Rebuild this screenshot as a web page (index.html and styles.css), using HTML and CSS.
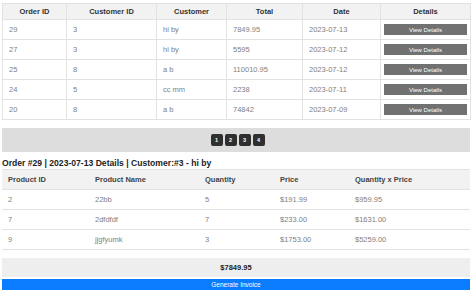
FILE: index.html
```html
<!DOCTYPE html>
<html lang="en">
<head>
    <meta charset="UTF-8">
    <title>Orders</title>
    <link rel="stylesheet" href="styles.css">
</head>
<body>
    <div class="Orders">
        <table class="Orders-table">
            <colgroup>
                <col style="width:64px"><col style="width:90px"><col style="width:70px">
                <col style="width:76px"><col style="width:78px"><col style="width:90px">
            </colgroup>
            <thead>
                <tr>
                    <th>Order ID</th>
                    <th>Customer ID</th>
                    <th>Customer</th>
                    <th>Total</th>
                    <th>Date</th>
                    <th>Details</th>
                </tr>
            </thead>
            <tbody>
                <tr><td>29</td><td>3</td><td>hi by</td><td>7849.95</td><td>2023-07-13</td><td><button class="Orders-view">View Details</button></td></tr>
                <tr><td>27</td><td>3</td><td>hi by</td><td>5595</td><td>2023-07-12</td><td><button class="Orders-view">View Details</button></td></tr>
                <tr><td>25</td><td>8</td><td>a b</td><td>110010.95</td><td>2023-07-12</td><td><button class="Orders-view">View Details</button></td></tr>
                <tr><td>24</td><td>5</td><td>cc mm</td><td>2238</td><td>2023-07-11</td><td><button class="Orders-view">View Details</button></td></tr>
                <tr><td>20</td><td>8</td><td>a b</td><td>74842</td><td>2023-07-09</td><td><button class="Orders-view">View Details</button></td></tr>
            </tbody>
        </table>

        <div class="Pager">
            <button class="Pager-page">1</button>
            <button class="Pager-page">2</button>
            <button class="Pager-page">3</button>
            <button class="Pager-page">4</button>
        </div>

        <h2 class="Details-title">Order #29 | 2023-07-13 Details | Customer:#3 - hi by</h2>

        <table class="Details-table">
            <colgroup>
                <col style="width:87px"><col style="width:110px"><col style="width:75px">
                <col style="width:75px"><col style="width:121px">
            </colgroup>
            <thead>
                <tr>
                    <th>Product ID</th>
                    <th>Product Name</th>
                    <th>Quantity</th>
                    <th>Price</th>
                    <th>Quantity x Price</th>
                </tr>
            </thead>
            <tbody>
                <tr><td>2</td><td>22bb</td><td>5</td><td>$191.99</td><td>$959.95</td></tr>
                <tr><td>7</td><td>2dfdfdf</td><td>7</td><td>$233.00</td><td>$1631.00</td></tr>
                <tr><td>9</td><td>jjgfyumk</td><td>3</td><td>$1753.00</td><td>$5259.00</td></tr>
            </tbody>
        </table>

        <div class="Details-total">$7849.95</div>
        <button class="Details-invoice">Generate Invoice</button>
    </div>
</body>
</html>
```

FILE: styles.css
```css
* {
    margin: 0;
    padding: 0;
    box-sizing: border-box;
}

html, body {
    background: #ffffff;
    font-family: 'Liberation Sans', Arial, sans-serif;
}

.Orders {
    width: 468px;
    margin: 3px 0 0 2px;
    display: flex;
    flex-direction: column;
}

.Orders-table,
.Details-table {
    width: 468px;
    table-layout: fixed;
    border-collapse: collapse;
    font-size: 7.5px;
}

.Orders-table th,
.Orders-table td {
    border: 1px solid #e2e2e2;
    text-align: left;
    padding: 0 6px;
    color: #808080;
    font-weight: normal;
    white-space: nowrap;
}

.Orders-table th {
    height: 16px;
    background: #f2f2f2;
    color: #333333;
    font-weight: bold;
    text-align: center;
}

.Orders-table td {
    height: 20px;
}

.Orders-table td:last-child {
    padding: 0 3px;
}

.Orders-view {
    display: block;
    width: 100%;
    height: 11px;
    border: none;
    background: #717171;
    color: #ffffff;
    font-family: inherit;
    font-size: 6px;
}

.Pager {
    margin-top: 8px;
    height: 24px;
    background: #dddddd;
    display: flex;
    justify-content: center;
    align-items: center;
    gap: 2px;
    padding-left: 3px;
}

.Pager-page {
    width: 12px;
    height: 12px;
    border: none;
    border-radius: 2px;
    background: #2f2f2f;
    color: #ffffff;
    font-family: inherit;
    font-size: 5.5px;
    font-weight: bold;
}

.Details-title {
    margin: 6px 0 1px;
    font-size: 8.6px;
    line-height: 10px;
    color: #222222;
    white-space: nowrap;
}

.Details-table th,
.Details-table td {
    height: 20px;
    padding: 0 6px;
    text-align: left;
    border-bottom: 1px solid #e2e2e2;
    white-space: nowrap;
}

.Details-table th {
    background: #f2f2f2;
    color: #444444;
    border-top: 1px solid #e2e2e2;
}

.Details-table td {
    color: #808080;
}

.Details-total {
    margin-top: 8px;
    height: 19px;
    background: #eeeeee;
    display: flex;
    align-items: center;
    justify-content: center;
    font-size: 7.5px;
    font-weight: bold;
    color: #222222;
}

.Details-invoice {
    margin-top: 2px;
    height: 11px;
    border: none;
    background: #0a7cff;
    color: #ffffff;
    font-family: inherit;
    font-size: 6.5px;
}
```
